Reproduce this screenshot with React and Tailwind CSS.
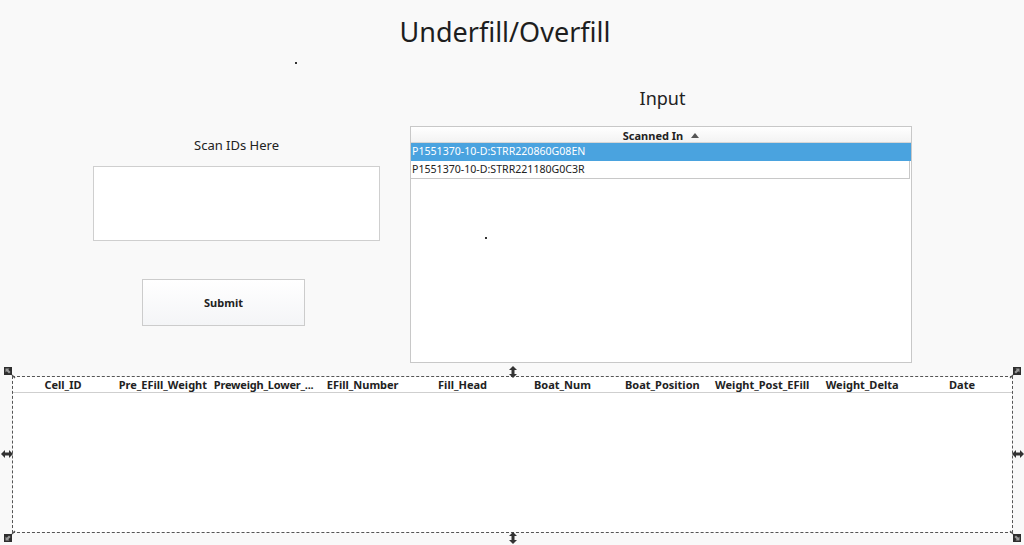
import React from 'react'

const cols = [
  'Cell_ID',
  'Pre_EFill_Weight',
  'Preweigh_Lower_...',
  'EFill_Number',
  'Fill_Head',
  'Boat_Num',
  'Boat_Position',
  'Weight_Post_EFill',
  'Weight_Delta',
  'Date',
]

const rows = ['P1551370-10-D:STRR220860G08EN', 'P1551370-10-D:STRR221180G0C3R']

// corner resize grip: small dark box with an arrow pointing outwards
function DiagHandle({ flipX, flipY }) {
  const t = `${flipX ? 'scaleX(-1)' : ''} ${flipY ? 'scaleY(-1)' : ''}`.trim()
  return (
    <svg width="12" height="12" viewBox="0 0 12 12" style={t ? { transform: t } : undefined}>
      <path d="M0 0 H8 V8 H0 Z" fill="#2e2e2e" />
      <path d="M1.5 1.5 L5.5 1.5 L4.3 2.7 L6.6 5 L5 6.6 L2.7 4.3 L1.5 5.5 Z" fill="#9a9a9a" />
      <path d="M8 8 L11 11" stroke="#555" strokeWidth="1.3" />
    </svg>
  )
}

function VHandle() {
  return (
    <svg width="10" height="12" viewBox="0 0 10 12">
      <path d="M5 0 L9 4 L6.5 4 L6.5 8 L9 8 L5 12 L1 8 L3.5 8 L3.5 4 L1 4 Z" fill="#333" />
    </svg>
  )
}

function HHandle() {
  return (
    <svg width="12" height="10" viewBox="0 0 12 10">
      <path d="M0 5 L4 1 L4 3.5 L8 3.5 L8 1 L12 5 L8 9 L8 6.5 L4 6.5 L4 9 Z" fill="#333" />
    </svg>
  )
}

export default function App() {
  return (
    <div
      className="relative h-[545px] w-[1024px] overflow-hidden bg-[#f9f9f9] text-[#222]"
      style={{ fontFamily: '"Noto Sans", "Open Sans", sans-serif' }}
    >
      <h1 className="pr-[14px] pt-[13px] text-center text-[27px] leading-[38px] text-[#1e1e1e]">Underfill/Overfill</h1>
      <span className="absolute left-[295px] top-[62px] h-[2px] w-[2px] bg-[#333]" />
      <span className="absolute left-[485px] top-[237px] h-[2px] w-[2px] bg-[#333]" />

      <div className="mt-[34px] flex gap-[30px] pl-[93px]">
        <div className="flex w-[287px] flex-col">
          <div className="mt-[51px] text-center text-[13px] leading-[18px]">Scan IDs Here</div>
          <textarea className="mt-[12px] h-[75px] resize-none border border-[#cfcfcf] bg-white outline-none" />
          <button className="ml-[49px] mt-[38px] h-[47px] w-[163px] border border-[#cccccc] bg-gradient-to-b from-white to-[#f4f5f7] pt-[2px] text-[11px] font-bold">
            Submit
          </button>
        </div>

        <div className="flex w-[502px] flex-col">
          <div className="pl-[3px] text-center text-[18px] leading-[26px]">Input</div>
          <div className="mt-[15px] h-[237px] border border-[#c8c8c8] bg-white">
            <div className="flex h-[16px] items-center justify-center border-b border-[#d6d6d6] bg-gradient-to-b from-white to-[#f3f3f3] pt-[3px] text-[11px] font-bold">
              Scanned In
              <svg className="mb-[2px] ml-[8px]" width="8" height="5" viewBox="0 0 8 5">
                <path d="M0 5 L4 0 L8 5 Z" fill="#555" />
              </svg>
            </div>
            {rows.map((r, i) => (
              <div
                key={r}
                className={
                  i === 0
                    ? 'flex h-[18px] items-center bg-[#4aa3df] pl-[1px] text-[10.6px] text-white'
                    : 'mr-[1px] flex h-[18px] items-center border-b border-r border-[#c8c8c8] pl-[1px] pt-[1px] text-[10.6px]'
                }
              >
                {r}
              </div>
            ))}
          </div>
        </div>
      </div>

      <div className="relative ml-[12px] mt-[13px] flex h-[157px] w-[1001px] flex-col border border-dashed border-[#555]">
        <div className="grid h-[16px] grid-cols-10 border-b border-[#cfcfcf] bg-white">
          {cols.map((c, i) => (
            <div
              key={c}
              className={
                i === 2
                  ? 'whitespace-nowrap pl-[1px] text-[11px] font-bold leading-[15px] tracking-[-0.2px]'
                  : 'whitespace-nowrap text-center text-[11px] font-bold leading-[15px]'
              }
            >
              {c}
            </div>
          ))}
        </div>
        <div className="flex-1 bg-white" />

        <span className="absolute left-[-9px] top-[-10px]"><DiagHandle /></span>
        <span className="absolute right-[-9px] top-[-10px]"><DiagHandle flipX /></span>
        <span className="absolute bottom-[-10px] left-[-9px]"><DiagHandle flipY /></span>
        <span className="absolute bottom-[-10px] right-[-9px]"><DiagHandle flipX flipY /></span>
        <span className="absolute left-[495px] top-[-11px]"><VHandle /></span>
        <span className="absolute bottom-[-12px] left-[495px]"><VHandle /></span>
        <span className="absolute left-[-12px] top-[72px]"><HHandle /></span>
        <span className="absolute right-[-12px] top-[72px]"><HHandle /></span>
      </div>
    </div>
  )
}
